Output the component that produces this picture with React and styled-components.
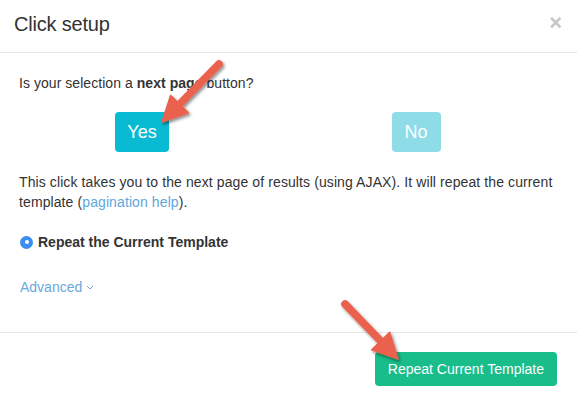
import React from "react";
import styled, { createGlobalStyle } from "styled-components";

const Global = createGlobalStyle`
  html, body { margin: 0; padding: 0; background: #fff; }
  body { font-family: "Liberation Sans", Arial, sans-serif; color: #333; }
  * { box-sizing: border-box; }
`;

const Modal = styled.div`
  position: relative;
  width: 577px;
  height: 402px;
  background: #fff;
  overflow: hidden;
`;

const Header = styled.div`
  height: 53px;
  padding: 0 14px;
  border-bottom: 1px solid #e5e5e5;
  display: flex;
  align-items: center;
  justify-content: space-between;
`;

const Title = styled.h4`
  margin: 0;
  font-size: 20px;
  font-weight: normal;
  color: #333;
  line-height: 1;
  margin-top: -4px;
  letter-spacing: -0.2px;
`;

const Close = styled.button`
  border: 0;
  background: none;
  padding: 0;
  margin: -6px 1px 0 0;
  font-family: "Liberation Sans", Arial, sans-serif;
  font-size: 22px;
  font-weight: bold;
  line-height: 1;
  color: #c6c6c6;
  cursor: pointer;
`;

const Body = styled.div`
  padding: 20px 20px 0 19px;
  font-size: 14px;
  line-height: 20px;
`;

const Question = styled.p`
  margin: 0;
  letter-spacing: 0.05px;
`;

const Choices = styled.div`
  display: grid;
  grid-template-columns: 274px 274px;
  margin: 19px 0 0 -14px;
  justify-items: center;
`;

const Choice = styled.button`
  height: 40px;
  padding: 0 10px;
  border: 0;
  border-radius: 4px;
  font-family: "Liberation Sans", Arial, sans-serif;
  font-size: 18px;
  color: #fff;
  background: ${(p) => (p.$muted ? "#8edce8" : "#08bbd3")};
  min-width: ${(p) => (p.$muted ? "49px" : "54px")};
  cursor: pointer;
`;

const Paragraph = styled.p`
  margin: 20px 0 0;
  letter-spacing: 0.1px;
`;

const Link = styled.a`
  color: #5ea6dc;
  text-decoration: none;
`;

const RadioRow = styled.label`
  margin-top: 20px;
  display: flex;
  align-items: center;
  gap: 5px;
  font-weight: bold;
  padding-left: 1px;
`;

const Radio = styled.span`
  width: 13px;
  height: 13px;
  border-radius: 50%;
  background: #3a8ef2;
  display: inline-flex;
  align-items: center;
  justify-content: center;
  &::after {
    content: "";
    width: 4px;
    height: 4px;
    border-radius: 50%;
    background: #fff;
  }
`;

const Advanced = styled.a`
  display: inline-flex;
  align-items: center;
  gap: 4px;
  margin-top: 25px;
  color: #6aa8de;
  text-decoration: none;
  padding-left: 1px;
`;

const Footer = styled.div`
  position: absolute;
  left: 0;
  right: 0;
  top: 332px;
  border-top: 1px solid #e5e5e5;
  padding: 19px 20px 0;
  display: flex;
  justify-content: flex-end;
`;

const Primary = styled.button`
  height: 34px;
  padding: 0 13px;
  border: 0;
  border-radius: 4px;
  background: #18bd8a;
  color: #fff;
  font-family: "Liberation Sans", Arial, sans-serif;
  font-size: 14px;
  cursor: pointer;
`;

const Overlay = styled.svg`
  position: absolute;
  left: 0;
  top: 0;
  pointer-events: none;
`;

function arrowPath(tail, tip, headLen = 25, headHalf = 12.5, shaftHalf = 3.8) {
  const dx = tip[0] - tail[0];
  const dy = tip[1] - tail[1];
  const len = Math.hypot(dx, dy);
  const ux = dx / len, uy = dy / len;
  const nx = -uy, ny = ux;
  const bx = tip[0] - ux * headLen, by = tip[1] - uy * headLen;
  const p = (x, y) => `${x.toFixed(1)},${y.toFixed(1)}`;
  return {
    shaft: [tail, [bx + ux * 2, by + uy * 2]],
    head: [
      p(tip[0], tip[1]),
      p(bx + nx * headHalf, by + ny * headHalf),
      p(bx - nx * headHalf, by - ny * headHalf),
    ].join(" "),
    shaftHalf,
  };
}

function Arrow({ tail, tip }) {
  const a = arrowPath(tail, tip);
  return (
    <g filter="url(#shadow)">
      <line
        x1={a.shaft[0][0]}
        y1={a.shaft[0][1]}
        x2={a.shaft[1][0]}
        y2={a.shaft[1][1]}
        stroke="#ea624e"
        strokeWidth={a.shaftHalf * 2}
        strokeLinecap="round"
      />
      <polygon points={a.head} fill="#ea624e" strokeLinejoin="round" stroke="#ea624e" strokeWidth="1.5" />
    </g>
  );
}

export default function App() {
  return (
    <>
      <Global />
      <Modal>
        <Header>
          <Title>Click setup</Title>
          <Close aria-label="Close">×</Close>
        </Header>
        <Body>
          <Question>
            Is your selection a <b>next page</b> button?
          </Question>
          <Choices>
            <Choice>Yes</Choice>
            <Choice $muted>No</Choice>
          </Choices>
          <Paragraph>
            This click takes you to the next page of results (using AJAX). It will repeat the current
            template (<Link href="#">pagination help</Link>).
          </Paragraph>
          <RadioRow>
            <Radio />
            Repeat the Current Template
          </RadioRow>
          <Advanced href="#">
            Advanced
            <svg width="8" height="5" viewBox="0 0 8 5">
              <path d="M1 1l3 3 3-3" fill="none" stroke="#6aa8de" strokeWidth="1" />
            </svg>
          </Advanced>
        </Body>
        <Footer>
          <Primary>Repeat Current Template</Primary>
        </Footer>
        <Overlay width="577" height="402" viewBox="0 0 577 402">
          <defs>
            <filter id="shadow" x="-30%" y="-30%" width="160%" height="160%">
              <feDropShadow dx="1.5" dy="2" stdDeviation="1.5" floodColor="#000" floodOpacity="0.45" />
            </filter>
          </defs>
          <Arrow tail={[219, 64]} tip={[162, 122]} />
          <Arrow tail={[345, 304]} tip={[398, 359]} />
        </Overlay>
      </Modal>
    </>
  );
}
